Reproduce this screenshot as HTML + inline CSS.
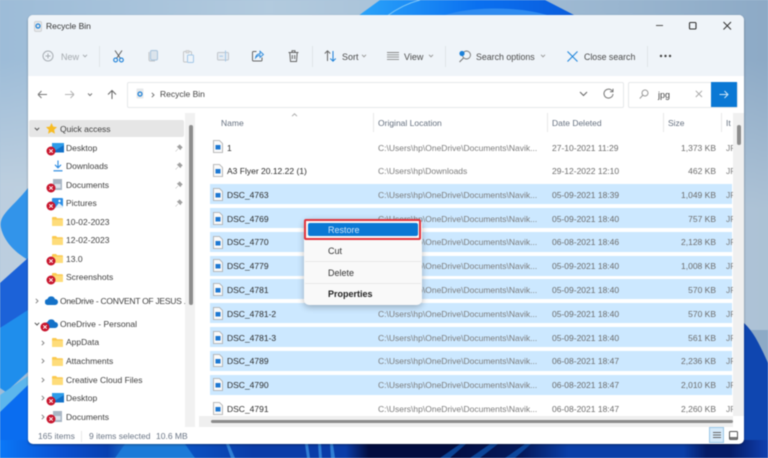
<!DOCTYPE html>
<html><head><meta charset="utf-8"><style>
html,body{margin:0;padding:0;width:768px;height:458px;overflow:hidden;background:#a9c4da}
#root{position:relative;width:768px;height:458px;overflow:hidden;filter:blur(.45px);font-family:"Liberation Sans",sans-serif;font-size:8.5px;color:#3c3c3c}
#bg{position:absolute;left:0;top:0}
#win{position:absolute;left:28px;top:15px;width:716px;height:429px;background:#fff;border-radius:5px;overflow:hidden;box-shadow:0 1px 2px rgba(0,0,0,.35)}
#tb{position:absolute;left:28px;top:15px;width:716px;height:61px;background:#eff4f9;border-radius:5px 5px 0 0}
.t{position:absolute;white-space:nowrap;line-height:12px;height:12px}
.a{position:absolute}
.row{position:absolute;left:210px;width:522px;height:20px;background:#cce8ff}
.n{left:227px;color:#2b2b2b}
.l{left:378px;color:#7c7c7c}
.d{left:552px;color:#6c6c6c}
.s{right:52px;color:#6c6c6c;text-align:right}
.i{left:726px;width:7px;overflow:hidden;color:#7c7c7c}
.nv{color:#3f3f3f}
.tbt{color:#4a4a4a}
.hd{color:#667180}
svg.a{overflow:visible}
</style></head><body><div id="root">
<svg id="bg" width="768" height="458" viewBox="0 0 768 458">
<defs>
<linearGradient id="g0" x1="0" x2="1" y1="0" y2="0"><stop offset="0" stop-color="#9dbcd8"/><stop offset=".35" stop-color="#b2cade"/><stop offset=".8" stop-color="#9ab6d0"/><stop offset="1" stop-color="#8daac6"/></linearGradient>
<linearGradient id="gv" x1="0" x2="0" y1="0" y2="1"><stop offset="0" stop-color="#c2d2e0" stop-opacity="0"/><stop offset=".55" stop-color="#c2d2e0" stop-opacity=".85"/><stop offset="1" stop-color="#c2d2e0" stop-opacity=".85"/></linearGradient>
<linearGradient id="g1" x1="0" x2="1" y1="0" y2="0"><stop offset="0" stop-color="#2ba4fa"/><stop offset=".55" stop-color="#0a70f0"/><stop offset="1" stop-color="#0a5cdc"/></linearGradient>
<linearGradient id="g2" x1="0" x2="1" y1="0" y2="0">
<stop offset="0" stop-color="#0a78f8"/><stop offset=".08" stop-color="#0a50d0"/><stop offset=".14" stop-color="#0840b0"/><stop offset=".17" stop-color="#1b72d0"/><stop offset=".25" stop-color="#0a50c0"/>
<stop offset=".33" stop-color="#0a3ca8"/><stop offset=".45" stop-color="#0a3ca8"/><stop offset=".48" stop-color="#030d40"/><stop offset=".58" stop-color="#030d40"/><stop offset=".68" stop-color="#051a5c"/>
<stop offset=".74" stop-color="#0a3fa8"/><stop offset=".89" stop-color="#0a3fa8"/><stop offset=".92" stop-color="#051b66"/><stop offset=".95" stop-color="#051b66"/><stop offset="1" stop-color="#1040b0"/></linearGradient>
<symbol id="err" viewBox="0 0 10 10"><circle cx="5" cy="5" r="4.5" fill="#c8152d"/><path d="M3.3 3.3L6.7 6.7M6.7 3.3L3.3 6.7" stroke="#fff" stroke-width="1"/></symbol>
<symbol id="fold" viewBox="0 0 11 9"><path d="M0 1q0-1 1-1h3l1.2 1.2H10q1 0 1 1V8q0 1-1 1H1q-1 0-1-1z" fill="#fbc94e"/><path d="M0 2.6h11V8q0 1-1 1H1q-1 0-1-1z" fill="#fedc7a"/></symbol>
<symbol id="file" viewBox="0 0 10 13"><path d="M.5.5H6.5L9.5 3.5V12.5H.5z" fill="#fafafa" stroke="#a8a8a8" stroke-width=".8"/><rect x="2.5" y="5" width="5" height="4.5" fill="#1e78d2"/></symbol>
<symbol id="cloud" viewBox="0 0 13 9"><path d="M3 9a3 3 0 0 1-.5-6A4 4 0 0 1 10 3a3 3 0 0 1 0 6z" fill="#1472c8"/></symbol>
<symbol id="pin" viewBox="0 0 8 8"><path d="M4.5 .5L7.5 3.5L6.5 4L5.5 5.5V6L2 2.5H2.5L4 1.5zM3 5L.5 7.5" fill="#a0a0a0" stroke="#a0a0a0" stroke-width=".5"/></symbol>
<symbol id="desk" viewBox="0 0 12 10"><rect width="12" height="9.5" fill="#2c9be8"/><path d="M0 9.5L12 2V9.5z" fill="#1170c8"/></symbol>
<symbol id="docs" viewBox="0 0 9 11"><rect width="9" height="11" fill="#a9b6c4"/><rect x="1.5" y="5" width="6" height="4" fill="#dbe2ea"/></symbol>
</defs>
<rect width="768" height="458" fill="url(#g0)"/>
<rect x="0" y="60" width="30" height="230" fill="url(#gv)"/>
<rect x="740" y="60" width="28" height="270" fill="url(#gv)" opacity=".7"/>
<path d="M28 188C12 208 -2 215 1 228C5 245 20 255 28 260z" fill="#3294ea"/>
<path d="M0 283L28 258V312L0 328z" fill="#1c62d8"/>
<path d="M0 328L28 310V372L6 392L0 388z" fill="#1f8eec"/>
<path d="M0 395L28 376V385L0 412z" fill="#5cb6ec"/>
<path d="M0 412L28 385V458H0z" fill="#0a6df0"/>
<path d="M744 323C755 333 762 350 768 363V458H744z" fill="#0f46b0"/>
<path d="M358 16L380 0H545L576 16z" fill="url(#g1)"/>
<path d="M387 16C398 8 408 3 420 0" stroke="#7cc6f8" stroke-width="1" fill="none"/>
<path d="M442 16C470 6 520 6 550 16z" fill="#2f8bf0"/>
<rect y="440" width="768" height="18" fill="url(#g2)"/>
<path d="M115 458L125 444H185L195 458z" fill="#1b7ad8"/>
<path d="M226 444h3l6 14h-4zM305 444h3l2 14h-3zM318 444h3l1 14h-3zM330 444l3 0l2 14h-4z" fill="#3a90e0" opacity=".8"/>
<path d="M440 458L460 444h6L450 458zM470 458L490 444h8L480 458zM505 458L525 444h6L515 458z" fill="#0f5ab8" opacity=".7"/>
</svg>
<div id="win"></div><div id="tb"></div>

<!-- title -->
<svg class="a" style="left:34px;top:21px" width="8" height="11"><rect x=".5" y=".5" width="7" height="10" rx="1" fill="#e6e8ea" stroke="#b5b5b5" stroke-width=".5"/><circle cx="4" cy="5" r="2" fill="none" stroke="#1c80d8" stroke-width="1.2"/></svg>
<div class="t" style="left:46px;top:20px;color:#333">Recycle Bin</div>
<svg class="a" style="left:656px;top:18px" width="76" height="14" fill="none" stroke="#333"><path d="M0 7.5H7" stroke="#555"/><rect x="33.5" y="4.5" width="6.5" height="6.5" rx="1" stroke-width="1.1"/><path d="M67.5 4L75 11.5M75 4L67.5 11.5"/></svg>

<!-- toolbar -->
<svg class="a" style="left:42px;top:50px" width="12" height="12" fill="none" stroke="#a8aeb4"><circle cx="6" cy="6" r="5"/><path d="M6 3.5V8.5M3.5 6H8.5"/></svg>
<div class="t" style="left:61px;top:51px;color:#a4a9ae;font-size:9px">New</div>
<svg class="a" style="left:82px;top:54px" width="6" height="4" fill="none" stroke="#a4a9ae"><path d="M1 .8L3 2.8L5 .8"/></svg>
<div class="a" style="left:99px;top:46px;width:1px;height:21px;background:#e0e4e8"></div>
<svg class="a" style="left:113px;top:50px" width="11" height="13" fill="none"><path d="M2 .5L7.5 8.5M9 .5L3.5 8.5" stroke="#555" stroke-width=".9"/><circle cx="2.6" cy="10" r="1.9" stroke="#1c80d8" stroke-width="1.1"/><circle cx="8.4" cy="10" r="1.9" stroke="#1c80d8" stroke-width="1.1"/></svg>
<svg class="a" style="left:148px;top:50px" width="11" height="12" fill="none"><rect x="2.5" y=".5" width="7" height="9.5" rx="1.5" fill="#dbe4ec" stroke="#a9c4dc"/><path d="M1 2V9.5Q1 11 2.5 11H7" stroke="#c0c4c8"/></svg>
<svg class="a" style="left:183px;top:50px" width="11" height="13" fill="none"><rect x=".5" y="1.5" width="8" height="10.5" rx="1" stroke="#c4c6c8"/><rect x="3" y=".5" width="3" height="2.5" fill="#ddd" stroke="#c4c6c8" stroke-width=".6"/><rect x="4.5" y="5" width="6" height="7.5" rx="1" fill="#eef4f9" stroke="#a4c8e8"/></svg>
<svg class="a" style="left:217px;top:50px" width="13" height="12" fill="none"><rect x=".5" y="2.5" width="11" height="7.5" rx="1" fill="#e6ecf2" stroke="#c0c6cc"/><path d="M2.5 6.2H6" stroke="#a4c8e8"/><path d="M8.5 .5V11.5" stroke="#a4c8e8"/></svg>
<svg class="a" style="left:252px;top:50px" width="12" height="12" fill="none"><path d="M4.5 1.5H1.5Q.5 1.5.5 2.5V10Q.5 11 1.5 11H9Q10 11 10 10V7.5" stroke="#666"/><path d="M3.5 8Q4 4 8 3.8V1.2L11.5 4.5L8 7.5V5.5Q5.5 5.3 3.5 8Z" fill="#cfe3f5" stroke="#1c80d8" stroke-width=".8"/></svg>
<svg class="a" style="left:288px;top:50px" width="11" height="12" fill="none" stroke="#666"><path d="M.5 2.5H10.5M4 2.5V.8H7V2.5M1.8 2.5L2.5 11.5H8.5L9.2 2.5"/><path d="M4.3 5V9M6.7 5V9"/></svg>
<div class="a" style="left:312px;top:46px;width:1px;height:21px;background:#e0e4e8"></div>
<svg class="a" style="left:324px;top:50px" width="13" height="12" fill="none"><path d="M3.5 11V1M.8 3.5L3.5 .8L6.2 3.5" stroke="#666"/><path d="M9 1V11M6.3 8.5L9 11.2L11.7 8.5" stroke="#1c80d8"/></svg>
<div class="t tbt" style="left:342px;top:51px;font-size:9px">Sort</div>
<svg class="a" style="left:361px;top:54px" width="6" height="4" fill="none" stroke="#999"><path d="M1 .8L3 2.8L5 .8"/></svg>
<svg class="a" style="left:387px;top:51px" width="12" height="10" stroke="#888" stroke-width=".9"><path d="M0 1.5H12M0 3.8H12M0 6.1H12M0 8.4H12"/></svg>
<div class="t tbt" style="left:404px;top:51px;font-size:9px">View</div>
<svg class="a" style="left:428px;top:54px" width="6" height="4" fill="none" stroke="#999"><path d="M1 .8L3 2.8L5 .8"/></svg>
<div class="a" style="left:445px;top:46px;width:1px;height:21px;background:#e0e4e8"></div>
<svg class="a" style="left:458px;top:50px" width="14" height="13" fill="none"><circle cx="8.5" cy="5" r="4" stroke="#777" stroke-width=".9"/><path d="M5.5 8L1.5 12" stroke="#777" stroke-width="1.1"/><circle cx="4" cy="3.5" r="2.6" fill="#1c80d8"/></svg>
<div class="t tbt" style="left:476px;top:51px;font-size:8.8px">Search options</div>
<svg class="a" style="left:540px;top:54px" width="6" height="4" fill="none" stroke="#999"><path d="M1 .8L3 2.8L5 .8"/></svg>
<svg class="a" style="left:567px;top:51px" width="11" height="11" fill="none" stroke="#2388dc" stroke-width="1.1"><path d="M.5 .5L10.5 10.5M10.5 .5L.5 10.5"/></svg>
<div class="t tbt" style="left:584px;top:51px;font-size:8.8px">Close search</div>
<div class="a" style="left:647px;top:46px;width:1px;height:21px;background:#e0e4e8"></div>
<svg class="a" style="left:659px;top:54px" width="13" height="4" fill="#444"><circle cx="2" cy="2" r="1.2"/><circle cx="6.5" cy="2" r="1.2"/><circle cx="11" cy="2" r="1.2"/></svg>

<!-- nav bar -->
<svg class="a" style="left:37px;top:89px" width="90" height="12" fill="none"><path d="M1 5.5H10M1 5.5L4.5 2M1 5.5L4.5 9" stroke="#777"/><path d="M28 5.5H37M37 5.5L33.5 2M37 5.5L33.5 9" stroke="#b4b4b4"/><path d="M51 4.5L53 6.5L55 4.5" stroke="#777"/><path d="M75 10V1.5M71 5.5L75 1.5L79 5.5" stroke="#666"/></svg>
<div class="a" style="left:127px;top:82px;width:495px;height:24px;border:1px solid #e6e8ea;background:#fff;border-radius:2px"></div>
<svg class="a" style="left:136px;top:88px" width="8" height="11"><rect x=".5" y=".5" width="7" height="10" rx="1" fill="#e6e8ea"/><circle cx="4" cy="6" r="2" fill="none" stroke="#1c80d8" stroke-width="1.2"/></svg>
<svg class="a" style="left:151px;top:92px" width="4" height="6" fill="none" stroke="#777"><path d="M.8 .8L3 3L.8 5.2"/></svg>
<div class="t" style="left:160px;top:88px;color:#444">Recycle Bin</div>
<svg class="a" style="left:579px;top:91px" width="9" height="6" fill="none" stroke="#666"><path d="M1 1L4.5 4.5L8 1"/></svg>
<svg class="a" style="left:603px;top:88px" width="11" height="11" fill="none" stroke="#777"><path d="M9.5 3.5A4.5 4.5 0 1 0 10 6"/><path d="M10 .8V3.8H7"/></svg>
<div class="a" style="left:628px;top:82px;width:108px;height:24px;border:1px solid #e6e8ea;background:#fff;border-radius:2px"></div>
<svg class="a" style="left:639px;top:89px" width="10" height="11" fill="none" stroke="#999"><circle cx="6" cy="4" r="3"/><path d="M3.8 6.2L.8 9.5"/></svg>
<div class="t" style="left:658px;top:89px;color:#444;font-size:9px">jpg</div>
<svg class="a" style="left:695px;top:90px" width="8" height="8" fill="none" stroke="#aaa"><path d="M.8 .8L7 7M7 .8L.8 7"/></svg>
<div class="a" style="left:711px;top:82px;width:26px;height:25px;background:#0a78d4"></div>
<svg class="a" style="left:719px;top:90px" width="10" height="9" fill="none" stroke="#cfe6f8"><path d="M.5 4.5H9M5.5 1L9 4.5L5.5 8"/></svg>

<!-- nav pane -->
<div class="a" style="left:29px;top:120px;width:155px;height:17px;background:#e6e6e6;border-radius:2px"></div>
<svg class="a" style="left:34px;top:127px" width="6" height="4" fill="none" stroke="#555"><path d="M.8 .8L3 3L5.2 .8"/></svg>
<svg class="a" style="left:46px;top:123px" width="11" height="11"><path d="M5.5 0L7.2 3.6L11 4.1L8.2 6.8L8.9 10.7L5.5 8.8L2.1 10.7L2.8 6.8L0 4.1L3.8 3.6z" fill="#f7bc24"/></svg>
<div class="t nv" style="left:60px;top:123px">Quick access</div>

<svg class="a" style="left:52px;top:143px" width="12" height="10"><use href="#desk"/></svg>
<svg class="a" style="left:46px;top:146px" width="10" height="10"><use href="#err"/></svg>
<div class="t nv" style="left:66px;top:142px">Desktop</div>
<svg class="a" style="left:175px;top:144px" width="8" height="8"><use href="#pin"/></svg>

<svg class="a" style="left:53px;top:160px" width="10" height="12" fill="none" stroke="#2b8ae0"><path d="M5 .5V7.5M2 4.8L5 7.8L8 4.8" stroke-width="1.1"/><path d="M.5 10.8H9.5" stroke-width="1.2"/></svg>
<div class="t nv" style="left:66px;top:160px">Downloads</div>
<svg class="a" style="left:175px;top:162px" width="8" height="8"><use href="#pin"/></svg>

<svg class="a" style="left:53px;top:179px" width="9" height="11"><use href="#docs"/></svg>
<svg class="a" style="left:46px;top:183px" width="10" height="10"><use href="#err"/></svg>
<div class="t nv" style="left:66px;top:179px">Documents</div>
<svg class="a" style="left:175px;top:181px" width="8" height="8"><use href="#pin"/></svg>

<svg class="a" style="left:52px;top:198px" width="11" height="10"><rect width="11" height="10" rx="1" fill="#2b8ee6"/><path d="M3 10L7 5L11 8.5V10z" fill="#e4eef6"/><circle cx="7.5" cy="3" r="1.2" fill="#fff"/></svg>
<svg class="a" style="left:46px;top:201px" width="10" height="10"><use href="#err"/></svg>
<div class="t nv" style="left:66px;top:197px">Pictures</div>
<svg class="a" style="left:175px;top:199px" width="8" height="8"><use href="#pin"/></svg>

<svg class="a" style="left:52px;top:217px" width="11" height="9"><use href="#fold"/></svg>
<div class="t nv" style="left:66px;top:216px">10-02-2023</div>
<svg class="a" style="left:52px;top:236px" width="11" height="9"><use href="#fold"/></svg>
<div class="t nv" style="left:66px;top:234px">12-02-2023</div>
<svg class="a" style="left:52px;top:254px" width="11" height="9"><use href="#fold"/></svg>
<svg class="a" style="left:46px;top:256px" width="10" height="10"><use href="#err"/></svg>
<div class="t nv" style="left:66px;top:253px">13.0</div>
<svg class="a" style="left:52px;top:273px" width="11" height="9"><use href="#fold"/></svg>
<svg class="a" style="left:46px;top:275px" width="10" height="10"><use href="#err"/></svg>
<div class="t nv" style="left:66px;top:271px">Screenshots</div>

<svg class="a" style="left:35px;top:298px" width="4" height="6" fill="none" stroke="#888"><path d="M.8 .8L3 3L.8 5.2"/></svg>
<svg class="a" style="left:45px;top:296px" width="13" height="9"><use href="#cloud"/></svg>
<div class="t nv" style="left:60px;top:295px;letter-spacing:-.27px">OneDrive - CONVENT OF JESUS .</div>
<svg class="a" style="left:34px;top:322px" width="6" height="4" fill="none" stroke="#555"><path d="M.8 .8L3 3L5.2 .8"/></svg>
<svg class="a" style="left:45px;top:319px" width="13" height="9"><use href="#cloud"/></svg>
<svg class="a" style="left:40px;top:322px" width="10" height="10"><use href="#err"/></svg>
<div class="t nv" style="left:60px;top:318px">OneDrive - Personal</div>

<svg class="a" style="left:41px;top:340px" width="4" height="6" fill="none" stroke="#888"><path d="M.8 .8L3 3L.8 5.2"/></svg>
<svg class="a" style="left:52px;top:338px" width="11" height="9"><use href="#fold"/></svg>
<div class="t nv" style="left:66px;top:336px">AppData</div>
<svg class="a" style="left:41px;top:358px" width="4" height="6" fill="none" stroke="#888"><path d="M.8 .8L3 3L.8 5.2"/></svg>
<svg class="a" style="left:52px;top:357px" width="11" height="9"><use href="#fold"/></svg>
<div class="t nv" style="left:66px;top:355px">Attachments</div>
<svg class="a" style="left:41px;top:377px" width="4" height="6" fill="none" stroke="#888"><path d="M.8 .8L3 3L.8 5.2"/></svg>
<svg class="a" style="left:52px;top:376px" width="11" height="9"><use href="#fold"/></svg>
<div class="t nv" style="left:66px;top:374px">Creative Cloud Files</div>
<svg class="a" style="left:41px;top:395px" width="4" height="6" fill="none" stroke="#888"><path d="M.8 .8L3 3L.8 5.2"/></svg>
<svg class="a" style="left:52px;top:393px" width="12" height="10"><use href="#desk"/></svg>
<svg class="a" style="left:46px;top:396px" width="10" height="10"><use href="#err"/></svg>
<div class="t nv" style="left:66px;top:392px">Desktop</div>
<svg class="a" style="left:41px;top:414px" width="4" height="6" fill="none" stroke="#888"><path d="M.8 .8L3 3L.8 5.2"/></svg>
<svg class="a" style="left:53px;top:411px" width="9" height="11"><use href="#docs"/></svg>
<svg class="a" style="left:46px;top:414px" width="10" height="10"><use href="#err"/></svg>
<div class="t nv" style="left:66px;top:411px">Documents</div>

<div class="a" style="left:185px;top:113px;width:10px;height:314px;background:#f1f1f1"></div>
<div class="a" style="left:189px;top:125px;width:4px;height:180px;background:#8c8c8c;border-radius:2px"></div>

<!-- header -->
<div class="t hd" style="left:221px;top:117px">Name</div>
<svg class="a" style="left:291px;top:113px" width="7" height="4" fill="none" stroke="#aaa"><path d="M1 3.2L3.5 .8L6 3.2"/></svg>
<div class="a" style="left:373px;top:113px;width:1px;height:19px;background:#e8e8e8"></div>
<div class="t hd" style="left:378px;top:117px">Original Location</div>
<div class="a" style="left:547px;top:113px;width:1px;height:19px;background:#e8e8e8"></div>
<div class="t hd" style="left:552px;top:117px">Date Deleted</div>
<div class="a" style="left:663px;top:113px;width:1px;height:19px;background:#e8e8e8"></div>
<div class="t hd" style="left:668px;top:117px">Size</div>
<div class="a" style="left:721px;top:113px;width:1px;height:19px;background:#e8e8e8"></div>
<div class="t hd" style="left:726px;top:117px">It</div>

<!-- rows -->
<div class="row" style="top:184px"></div>
<div class="row" style="top:208px"></div>
<div class="row" style="top:232px"></div>
<div class="row" style="top:256px"></div>
<div class="row" style="top:279px"></div>
<div class="row" style="top:303px"></div>
<div class="row" style="top:327px"></div>
<div class="row" style="top:351px"></div>
<div class="row" style="top:375px"></div>

<svg class="a" style="left:213px;top:140px" width="10" height="13"><use href="#file"/></svg>
<div class="t n" style="top:142px">1</div><div class="t l" style="top:142px">C:\Users\hp\OneDrive\Documents\Navik...</div><div class="t d" style="top:142px">27-10-2021 11:29</div><div class="t s" style="top:142px">1,373 KB</div><div class="t i" style="top:142px">JP</div>

<svg class="a" style="left:213px;top:164px" width="10" height="13"><use href="#file"/></svg>
<div class="t n" style="top:165px">A3 Flyer 20.12.22 (1)</div><div class="t l" style="top:165px">C:\Users\hp\Downloads</div><div class="t d" style="top:165px">29-12-2022 12:10</div><div class="t s" style="top:165px">462 KB</div><div class="t i" style="top:165px">JP</div>

<svg class="a" style="left:213px;top:188px" width="10" height="13"><use href="#file"/></svg>
<div class="t n" style="top:189px">DSC_4763</div><div class="t l" style="top:189px">C:\Users\hp\OneDrive\Documents\Navik...</div><div class="t d" style="top:189px">05-09-2021 18:39</div><div class="t s" style="top:189px">1,049 KB</div><div class="t i" style="top:189px">JP</div>

<svg class="a" style="left:213px;top:212px" width="10" height="13"><use href="#file"/></svg>
<div class="t n" style="top:213px">DSC_4769</div><div class="t l" style="top:213px">C:\Users\hp\OneDrive\Documents\Navik...</div><div class="t d" style="top:213px">05-09-2021 18:40</div><div class="t s" style="top:213px">757 KB</div><div class="t i" style="top:213px">JP</div>

<svg class="a" style="left:213px;top:236px" width="10" height="13"><use href="#file"/></svg>
<div class="t n" style="top:236px">DSC_4770</div><div class="t l" style="top:236px">C:\Users\hp\OneDrive\Documents\Navik...</div><div class="t d" style="top:236px">06-08-2021 18:46</div><div class="t s" style="top:236px">2,128 KB</div><div class="t i" style="top:236px">JP</div>

<svg class="a" style="left:213px;top:259px" width="10" height="13"><use href="#file"/></svg>
<div class="t n" style="top:260px">DSC_4779</div><div class="t l" style="top:260px">C:\Users\hp\OneDrive\Documents\Navik...</div><div class="t d" style="top:260px">05-09-2021 18:40</div><div class="t s" style="top:260px">1,008 KB</div><div class="t i" style="top:260px">JP</div>

<svg class="a" style="left:213px;top:283px" width="10" height="13"><use href="#file"/></svg>
<div class="t n" style="top:284px">DSC_4781</div><div class="t l" style="top:284px">C:\Users\hp\OneDrive\Documents\Navik...</div><div class="t d" style="top:284px">05-09-2021 18:40</div><div class="t s" style="top:284px">570 KB</div><div class="t i" style="top:284px">JP</div>

<svg class="a" style="left:213px;top:307px" width="10" height="13"><use href="#file"/></svg>
<div class="t n" style="top:308px">DSC_4781-2</div><div class="t l" style="top:308px">C:\Users\hp\OneDrive\Documents\Navik...</div><div class="t d" style="top:308px">05-09-2021 18:40</div><div class="t s" style="top:308px">570 KB</div><div class="t i" style="top:308px">JP</div>

<svg class="a" style="left:213px;top:331px" width="10" height="13"><use href="#file"/></svg>
<div class="t n" style="top:332px">DSC_4781-3</div><div class="t l" style="top:332px">C:\Users\hp\OneDrive\Documents\Navik...</div><div class="t d" style="top:332px">05-09-2021 18:40</div><div class="t s" style="top:332px">561 KB</div><div class="t i" style="top:332px">JP</div>

<svg class="a" style="left:213px;top:354px" width="10" height="13"><use href="#file"/></svg>
<div class="t n" style="top:355px">DSC_4789</div><div class="t l" style="top:355px">C:\Users\hp\OneDrive\Documents\Navik...</div><div class="t d" style="top:355px">06-08-2021 18:47</div><div class="t s" style="top:355px">2,236 KB</div><div class="t i" style="top:355px">JP</div>

<svg class="a" style="left:213px;top:378px" width="10" height="13"><use href="#file"/></svg>
<div class="t n" style="top:379px">DSC_4790</div><div class="t l" style="top:379px">C:\Users\hp\OneDrive\Documents\Navik...</div><div class="t d" style="top:379px">06-08-2021 18:47</div><div class="t s" style="top:379px">2,010 KB</div><div class="t i" style="top:379px">JP</div>

<svg class="a" style="left:213px;top:402px" width="10" height="13"><use href="#file"/></svg>
<div class="t n" style="top:403px">DSC_4791</div><div class="t l" style="top:403px">C:\Users\hp\OneDrive\Documents\Navik...</div><div class="t d" style="top:403px">06-08-2021 18:47</div><div class="t s" style="top:403px">2,260 KB</div><div class="t i" style="top:403px">JP</div>

<!-- scrollbars -->
<div class="a" style="left:733px;top:113px;width:11px;height:303px;background:#f0f0f0"></div>
<div class="a" style="left:737px;top:125px;width:4px;height:20px;background:#8c8c8c;border-radius:2px"></div>
<div class="a" style="left:199px;top:416px;width:534px;height:11px;background:#efefef"></div>
<div class="a" style="left:211px;top:420px;width:522px;height:3px;background:#8c8c8c;border-radius:2px"></div>

<!-- status -->
<div class="t" style="left:38px;top:430px;color:#6b7686">165 items</div>
<div class="a" style="left:81px;top:431px;width:1px;height:11px;background:#e8e8e8"></div>
<div class="t" style="left:89px;top:430px;color:#6b7686">9 items selected</div>
<div class="t" style="left:156px;top:430px;color:#6b7686">10.6 MB</div>
<div class="a" style="left:709px;top:427px;width:15px;height:16px;background:#d6eafa;border:1px solid #9cc8e8;box-sizing:border-box"></div>
<svg class="a" style="left:712px;top:431px" width="10" height="9" stroke="#666"><path d="M1 1.5H9M1 4H9M1 6.5H9"/></svg>
<svg class="a" style="left:729px;top:431px" width="9" height="9" fill="none"><rect x=".5" y=".5" width="8" height="8" rx="1" stroke="#555"/><rect x="1" y="6" width="7" height="2.5" fill="#777"/></svg>

<!-- context menu -->
<div class="a" style="left:304px;top:219px;width:118px;height:86px;background:#f9f9f9;border-radius:5px;box-shadow:0 2px 7px rgba(0,0,0,.28)"></div>
<div class="a" style="left:308px;top:223px;width:110px;height:13px;background:#0a78d4;border-radius:2px"></div>
<div class="a" style="left:304px;top:219px;width:117px;height:21px;border:2px solid #e2343c;box-sizing:border-box;border-radius:2px"></div>
<div class="t" style="left:328px;top:224px;color:#cfe3f5;font-size:9px">Restore</div>
<div class="t" style="left:328px;top:245px;color:#333;font-size:9px">Cut</div>
<div class="a" style="left:305px;top:261px;width:116px;height:1px;background:#e8e8e8"></div>
<div class="t" style="left:328px;top:267px;color:#333;font-size:9px">Delete</div>
<div class="a" style="left:305px;top:283px;width:116px;height:1px;background:#e8e8e8"></div>
<div class="t" style="left:328px;top:288px;color:#222;font-weight:bold;font-size:9px">Properties</div>
</div></body></html>
